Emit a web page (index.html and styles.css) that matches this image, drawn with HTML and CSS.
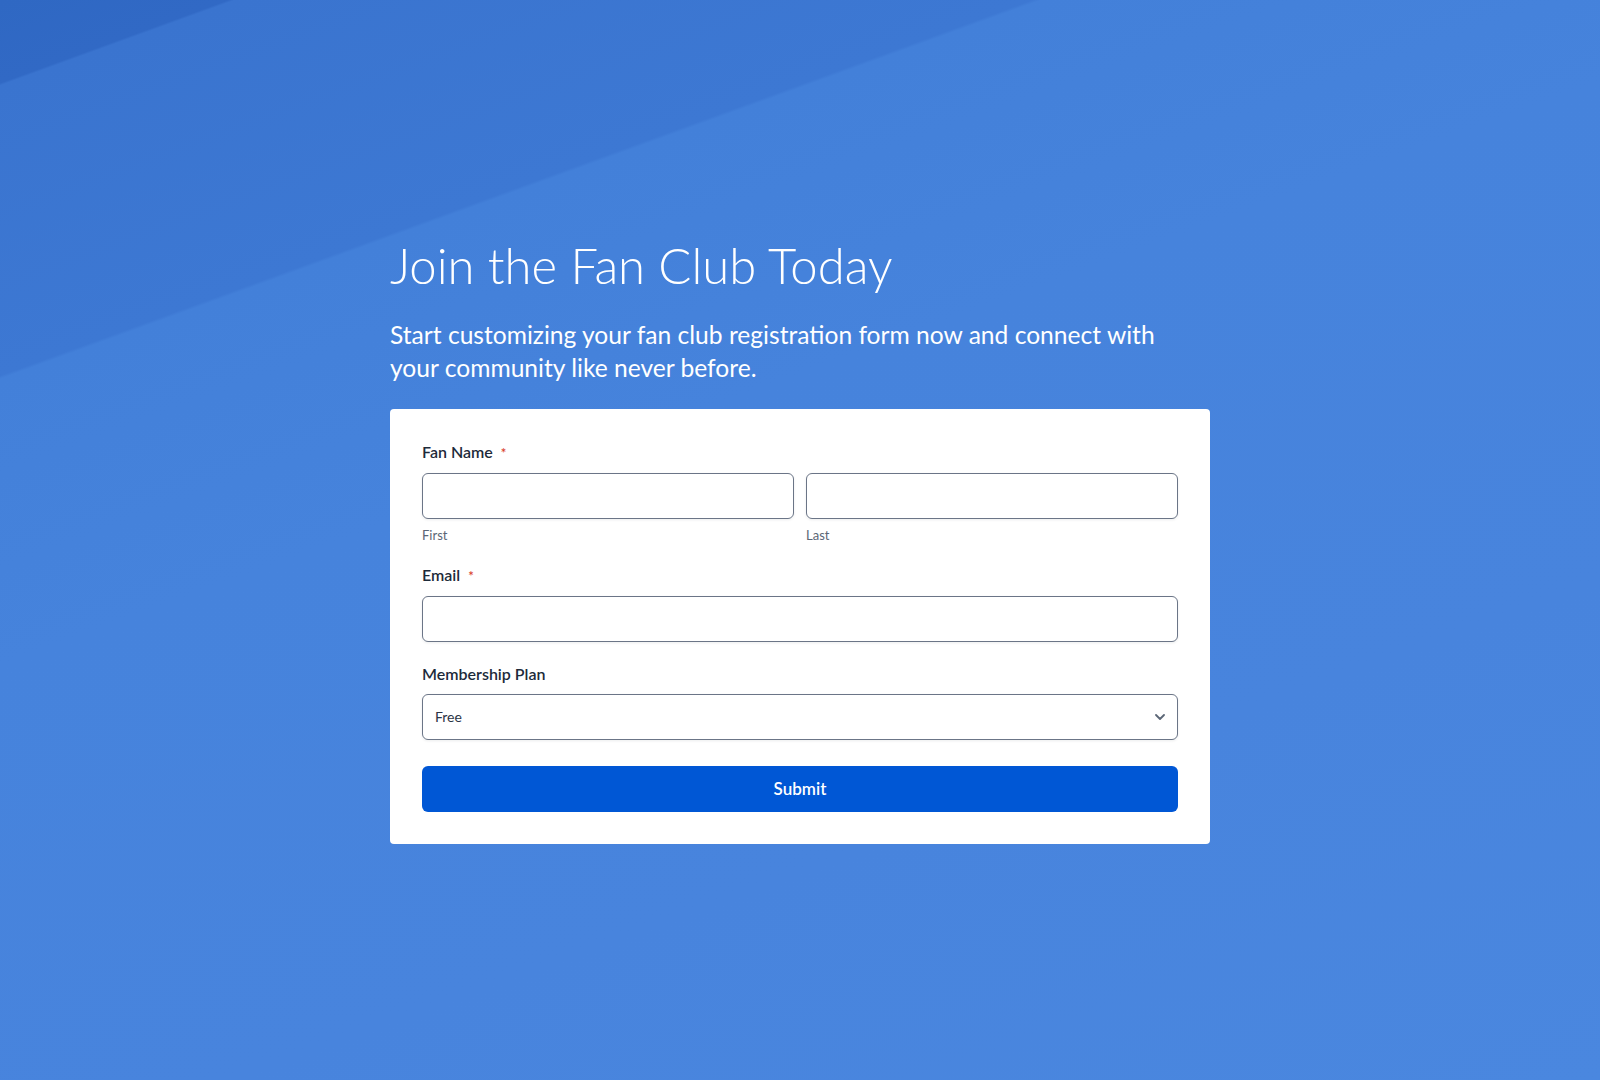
FILE: index.html
```html
<!DOCTYPE html>
<html lang="en">
<head>
    <meta charset="UTF-8">
    <meta name="viewport" content="width=device-width, initial-scale=1.0">
    <title>Fan Club Registration</title>
    <link rel="stylesheet" href="styles.css">
</head>
<body>
    <main class="page">
        <header class="intro">
            <h1>Join the Fan Club Today</h1>
            <p>Start customizing your fan club registration form now and connect with your community like never before.</p>
        </header>

        <form class="card" onsubmit="return false;">
            <div class="field">
                <label class="field-label" for="firstName">Fan Name <span class="req">*</span></label>
                <div class="name-row">
                    <div class="name-part">
                        <input type="text" id="firstName">
                        <span class="sub-label">First</span>
                    </div>
                    <div class="name-part">
                        <input type="text" id="lastName">
                        <span class="sub-label">Last</span>
                    </div>
                </div>
            </div>

            <div class="field">
                <label class="field-label" for="email">Email <span class="req">*</span></label>
                <input type="email" id="email">
            </div>

            <div class="field">
                <label class="field-label" for="plan">Membership Plan</label>
                <div class="select-wrap">
                    <select id="plan">
                        <option>Free</option>
                        <option>Silver</option>
                        <option>Gold</option>
                    </select>
                    <svg class="chevron" width="10" height="6" viewBox="0 0 10 6">
                        <path d="M1 1l4 4 4-4" fill="none" stroke="#5b6676" stroke-width="1.8" stroke-linecap="round" stroke-linejoin="round"/>
                    </svg>
                </div>
            </div>

            <button type="submit" class="submit">Submit</button>
        </form>
    </main>
</body>
</html>
```

FILE: styles.css
```css
html, body {
    height: 100%;
}
body {
    margin: 0;
    font-family: "Lato", "Open Sans", sans-serif;
    background: linear-gradient(160deg, #2f68c3 0%, #3169c5 5%, #3a74cf 5.15%, #3d78d3 22.6%, #4380d9 22.8%, #4683dc 40%, #4884dd 70%, #4a87df 100%);
    color: #1d2a3a;
}
.page {
    width: 820px;
    margin: 0 auto;
    padding-top: 236px;
}
.intro h1 {
    margin: 0;
    font-size: 49px;
    font-weight: 300;
    line-height: 1.2;
    color: #fff;
}
.intro p {
    margin: 23px 0 25px;
    max-width: 790px;
    font-size: 24.6px;
    line-height: 33px;
    color: #fff;
}
.card {
    display: flex;
    flex-direction: column;
    gap: 20px;
    padding: 31px 32px 32px;
    background: #fff;
    border-radius: 4px;
}
.field-label {
    display: block;
    margin-bottom: 8px;
    font-size: 16px;
    font-weight: 600;
    line-height: 24px;
    color: #1d2a3a;
}
.req {
    margin-left: 4px;
    font-size: 13px;
    color: #d9412b;
}
.name-row {
    display: grid;
    grid-template-columns: 1fr 1fr;
    gap: 12px;
}
.name-part {
    display: flex;
    flex-direction: column;
}
.sub-label {
    margin-top: 8px;
    font-size: 13px;
    line-height: 16px;
    color: #5b6676;
}
input, select {
    display: block;
    box-sizing: border-box;
    width: 100%;
    height: 46px;
    padding: 0 12px;
    border: 1px solid #6b7587;
    border-radius: 6px;
    background: #fff;
    box-shadow: 0 1px 3px rgba(16, 24, 40, 0.08);
    font-family: inherit;
    font-size: 14px;
    color: #2b3445;
}
.select-wrap {
    position: relative;
}
select {
    appearance: none;
    -webkit-appearance: none;
}
.chevron {
    position: absolute;
    right: 13px;
    top: 20px;
    pointer-events: none;
}
.submit {
    margin-top: 6px;
    height: 46px;
    border: none;
    border-radius: 6px;
    background: #0057d5;
    font-family: inherit;
    font-size: 17px;
    font-weight: 600;
    color: #fff;
    cursor: pointer;
}
.submit:hover {
    background: #0049b3;
}
```
